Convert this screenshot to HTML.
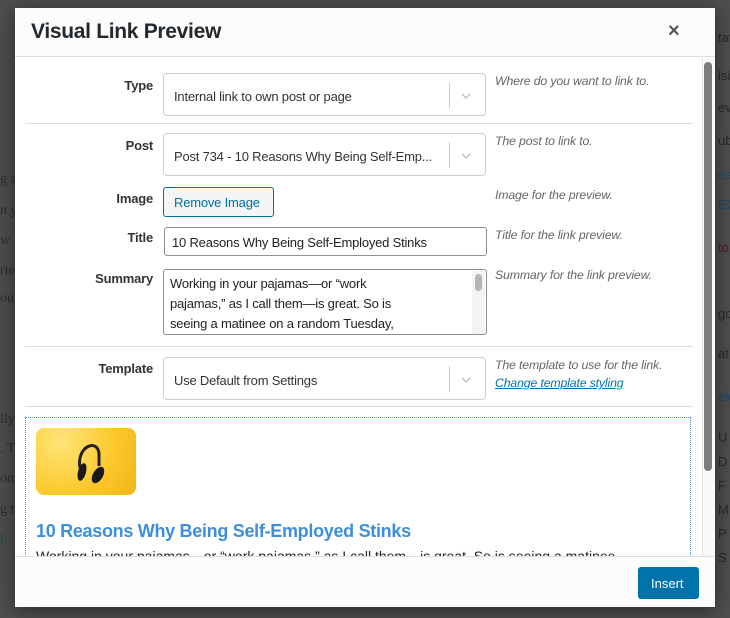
<!DOCTYPE html>
<html><head><meta charset="utf-8"><style>
*{box-sizing:border-box;margin:0;padding:0}
body{width:730px;height:618px;overflow:hidden;background:#4f4f4f;font-family:"Liberation Sans",sans-serif;position:relative}
.bgt{position:absolute;color:#2e2e2e;font-family:"Liberation Serif",serif;font-size:14px}
.bgr{position:absolute;color:#2a2a2a;font-size:13px;left:718px}
.m{position:absolute;left:15px;top:8px;width:700px;height:599px;background:#fff;box-shadow:0 3px 20px rgba(0,0,0,.5);overflow:hidden}
.hd{position:absolute;left:0;top:0;width:700px;height:49px;background:#fcfcfc;border-bottom:1px solid #ddd}
.hd h1{position:absolute;left:16px;top:12px;font-size:21px;font-weight:bold;color:#23282d;letter-spacing:-.3px}
.x{position:absolute;left:653px;top:12px;font-size:20px;font-weight:bold;color:#555}
.a{position:absolute}
.lbl{position:absolute;right:562px;font-size:13px;font-weight:bold;color:#333;text-align:right;letter-spacing:-.2px}
.sel{position:absolute;left:148px;width:323px;height:43px;border:1px solid #ccc;border-radius:4px;font-size:13px;color:#333;padding:15px 10px;white-space:nowrap;overflow:hidden;letter-spacing:-.2px}
.sel .d{position:absolute;left:285px;top:8px;width:1px;height:26px;background:#ccc}
.sel .c{position:absolute;left:297px;top:17px;width:10px;height:10px}
.help{position:absolute;left:480px;font-size:12.3px;font-style:italic;color:#666;letter-spacing:-.15px}
.sep{position:absolute;left:10px;width:668px;height:1px;background:#ddd}
.ft{position:absolute;left:0;top:548px;width:700px;height:51px;background:#fcfcfc;border-top:1px solid #ddd}
</style></head><body>
<div class="bgt" style="left:0;top:172px">g a</div>
<div class="bgt" style="left:0;top:203px">n y</div>
<div class="bgt" style="left:0;top:233px">w</div>
<div class="bgt" style="left:0;top:263px">rie</div>
<div class="bgt" style="left:0;top:291px">ou</div>
<div class="bgt" style="left:0;top:412px">lly</div>
<div class="bgt" style="left:0;top:441px">. T</div>
<div class="bgt" style="left:0;top:471px">om</div>
<div class="bgt" style="left:0;top:502px">g t</div>
<div class="bgt" style="left:0;top:532px;color:#1d4a5a">b</div>
<div class="bgr" style="top:30px">tat</div>
<div class="bgr" style="top:68px">isi</div>
<div class="bgr" style="top:100px">ev</div>
<div class="bgr" style="top:133px">ub</div>
<div class="bgr" style="top:167px;color:#1d4a6a">ea</div>
<div class="bgr" style="top:197px;color:#1d4a6a">EC</div>
<div class="bgr" style="top:240px;color:#5a1a1a">to</div>
<div class="bgr" style="top:306px">go</div>
<div class="bgr" style="top:346px">at</div>
<div class="bgr" style="top:389px;color:#1d4a6a">ele</div>
<div class="bgr" style="top:430px">U</div>
<div class="bgr" style="top:454px">D</div>
<div class="bgr" style="top:478px">F</div>
<div class="bgr" style="top:502px">M</div>
<div class="bgr" style="top:526px">P</div>
<div class="bgr" style="top:550px">S</div>
<div class="m">
 <div class="hd"><h1>Visual Link Preview</h1><div class="x">×</div></div>
 <div class="a" style="left:687px;top:50px;width:13px;height:498px;border-left:1px solid #e5e5e5;background:#fafafa"></div>
 <div class="a" style="left:689px;top:54px;width:8px;height:409px;background:#7d7d7d;border-radius:4px"></div>

 <div class="lbl" style="top:70px">Type</div>
 <div class="sel" style="top:65px">Internal link to own post or page<div class="d"></div><svg class="c" viewBox="0 0 10 10"><path d="M1 3l4 4 4-4" fill="none" stroke="#bbb" stroke-width="1.3"/></svg></div>
 <div class="help" style="top:66px">Where do you want to link to.</div>
 <div class="sep" style="top:115px"></div>

 <div class="lbl" style="top:130px">Post</div>
 <div class="sel" style="top:125px">Post 734 - 10 Reasons Why Being Self-Emp...<div class="d"></div><svg class="c" viewBox="0 0 10 10"><path d="M1 3l4 4 4-4" fill="none" stroke="#bbb" stroke-width="1.3"/></svg></div>
 <div class="help" style="top:126px">The post to link to.</div>

 <div class="lbl" style="top:183px">Image</div>
 <div class="a" style="left:148px;top:179px;width:111px;height:30px;border:1px solid #0071a1;border-radius:3px;background:#f3f5f6;color:#0071a1;font-size:13px;padding:7px 0 0 10px;letter-spacing:-.2px">Remove Image</div>
 <div class="help" style="top:180px">Image for the preview.</div>

 <div class="lbl" style="top:222px">Title</div>
 <div class="a" style="left:149px;top:219px;width:323px;height:29px;border:1px solid #8c8f94;border-radius:3px;font-size:13px;color:#222;padding:7px 7px;letter-spacing:-.2px">10 Reasons Why Being Self-Employed Stinks</div>
 <div class="help" style="top:220px">Title for the link preview.</div>

 <div class="lbl" style="top:263px">Summary</div>
 <div class="a" style="left:148px;top:261px;width:324px;height:66px;border:1px solid #8c8f94;border-radius:3px;font-size:13px;color:#222;padding:4px 6px;line-height:20px;letter-spacing:-.2px;overflow:hidden">Working in your pajamas—or “work<br>pajamas,” as I call them—is great. So is<br>seeing a matinee on a random Tuesday,
  <div class="a" style="left:308px;top:1px;width:13px;height:63px;background:#f4f4f4"></div>
  <div class="a" style="left:311px;top:4px;width:7px;height:17px;background:#b5b5b5;border-radius:4px"></div>
 </div>
 <div class="help" style="top:260px">Summary for the link preview.</div>
 <div class="sep" style="top:338px"></div>

 <div class="lbl" style="top:353px">Template</div>
 <div class="sel" style="top:349px">Use Default from Settings<div class="d"></div><svg class="c" viewBox="0 0 10 10"><path d="M1 3l4 4 4-4" fill="none" stroke="#bbb" stroke-width="1.3"/></svg></div>
 <div class="help" style="top:350px">The template to use for the link.</div>
 <div class="help" style="top:368px;color:#0073aa;text-decoration:underline">Change template styling</div>
 <div class="sep" style="top:398px"></div>

 <div class="a" style="left:10px;top:409px;width:666px;height:200px;border:1px dotted #4a90d9"></div>
 <div class="a" style="left:21px;top:420px;width:100px;height:67px;border-radius:8px;background:radial-gradient(circle at 25% 20%,#ffe577,#fcc72a 60%,#f0b419)">
  <svg width="100" height="67" viewBox="0 0 100 67"><path d="M44 40 C40 18,62 10,63 26 L63 38" fill="none" stroke="#222" stroke-width="3"/><ellipse cx="46" cy="44" rx="4" ry="9" fill="#1a1a1a" transform="rotate(15 46 44)"/><ellipse cx="62" cy="47" rx="5" ry="9" fill="#1a1a1a" transform="rotate(30 62 47)"/></svg>
 </div>
 <div class="a" style="left:21px;top:513px;font-size:18px;font-weight:bold;color:#3d8fdc;letter-spacing:-.3px">10 Reasons Why Being Self-Employed Stinks</div>
 <div class="a" style="left:21px;top:540px;font-size:14px;color:#222">Working in your pajamas—or “work pajamas,” as I call them—is great. So is seeing a matinee</div>

 <div class="ft"><div class="a" style="left:623px;top:10px;width:61px;height:32px;background:#0073aa;border-radius:3px;color:#fff;font-size:13px;padding:9px 0 0 13px">Insert</div></div>
</div>
</body></html>
